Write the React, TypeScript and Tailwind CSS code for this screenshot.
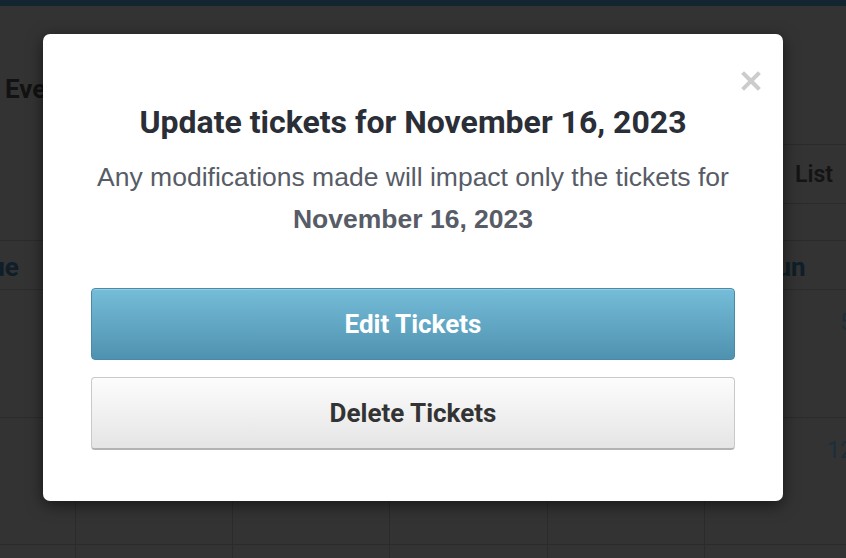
import React from "react";

const days = ["Tue", "Wed", "Thu", "Fri", "Sat", "Sun"];
const rows = [
  ["31", "1", "2", "3", "4", "5"],
  ["7", "8", "9", "10", "11", "12"],
  ["14", "15", "16", "17", "18", "19"],
];

export default function App() {
  return (
    <div className="relative w-[846px] h-[558px] overflow-hidden bg-[#333333] font-['Roboto',sans-serif]">
      {/* dimmed page behind */}
      <div className="h-[6px] bg-[#13262f]" />
      <div className="pl-[5px] pt-[68px] text-[26px] leading-[30px] font-bold text-[#121212]">Events Calendar</div>
      <div className="flex justify-end mt-[40px]">
        <div className="w-[90px] h-[60px] border border-r-0 border-[#2a2a2a] flex items-center pl-[38px] pt-[3px] text-[23px] font-semibold text-[#141414]">
          List
        </div>
      </div>
      <div className="mt-[36px] ml-[-81px] w-[950px]">
        <div className="grid grid-cols-[157px_157px_157px_158px_157px_157px] h-[50px] border-y border-[#2b2b2b]">
          {days.map((d) => (
            <div key={d} className="border-r border-[#2b2b2b] flex items-center justify-center pt-[4px] text-[26px] font-bold text-[#0f1e28]">
              {d}
            </div>
          ))}
        </div>
        {rows.map((r, i) => (
          <div key={i} className={`grid grid-cols-[157px_157px_157px_158px_157px_157px] border-b border-[#2b2b2b] ${i === 0 ? "h-[128px]" : "h-[127px]"}`}>
            {r.map((n, j) => (
              <div key={j} className="border-r border-[#2b2b2b] flex justify-end pr-[8px] pt-[16px] text-[23px] text-[#1b2e3b]">
                {n}
              </div>
            ))}
          </div>
        ))}
      </div>

      {/* modal */}
      <div className="absolute left-[43px] top-[34px] w-[740px] bg-white rounded-[7px] shadow-[0_4px_16px_rgba(0,0,0,0.55)] pt-[69px] px-[48px] pb-[51px]">
        <button className="absolute top-[37px] right-[22px] w-[20px] h-[20px]" aria-label="Close">
          <svg viewBox="0 0 20 20" width="20" height="20">
            <path d="M3 3 L17 17 M17 3 L3 17" stroke="#cccccc" strokeWidth="4" strokeLinecap="square" />
          </svg>
        </button>
        <h2 className="text-center text-[32px] leading-[38px] font-bold text-[#2a2e37]">
          Update tickets for November 16, 2023
        </h2>
        <p className="mt-[15px] text-center text-[26.5px] leading-[42px] text-[#575c67] font-['Liberation_Sans',sans-serif]">
          Any modifications made will impact only the tickets for
          <br />
          <span className="font-bold">November 16, 2023</span>
        </p>
        <div className="mt-[48px] flex flex-col gap-[17px]">
          <button className="h-[72px] rounded-[4px] border border-[#4a8aa6] bg-gradient-to-b from-[#75bdd9] to-[#4f92af] text-white text-[26px] font-bold shadow-[inset_0_1px_0_rgba(255,255,255,0.25)]">
            Edit Tickets
          </button>
          <button className="h-[73px] rounded-[4px] border border-[#c9c9c9] border-b-[#b3b3b3] border-b-2 bg-gradient-to-b from-[#fcfcfc] to-[#e5e5e5] text-[#333333] text-[26px] font-bold">
            Delete Tickets
          </button>
        </div>
      </div>
    </div>
  );
}
